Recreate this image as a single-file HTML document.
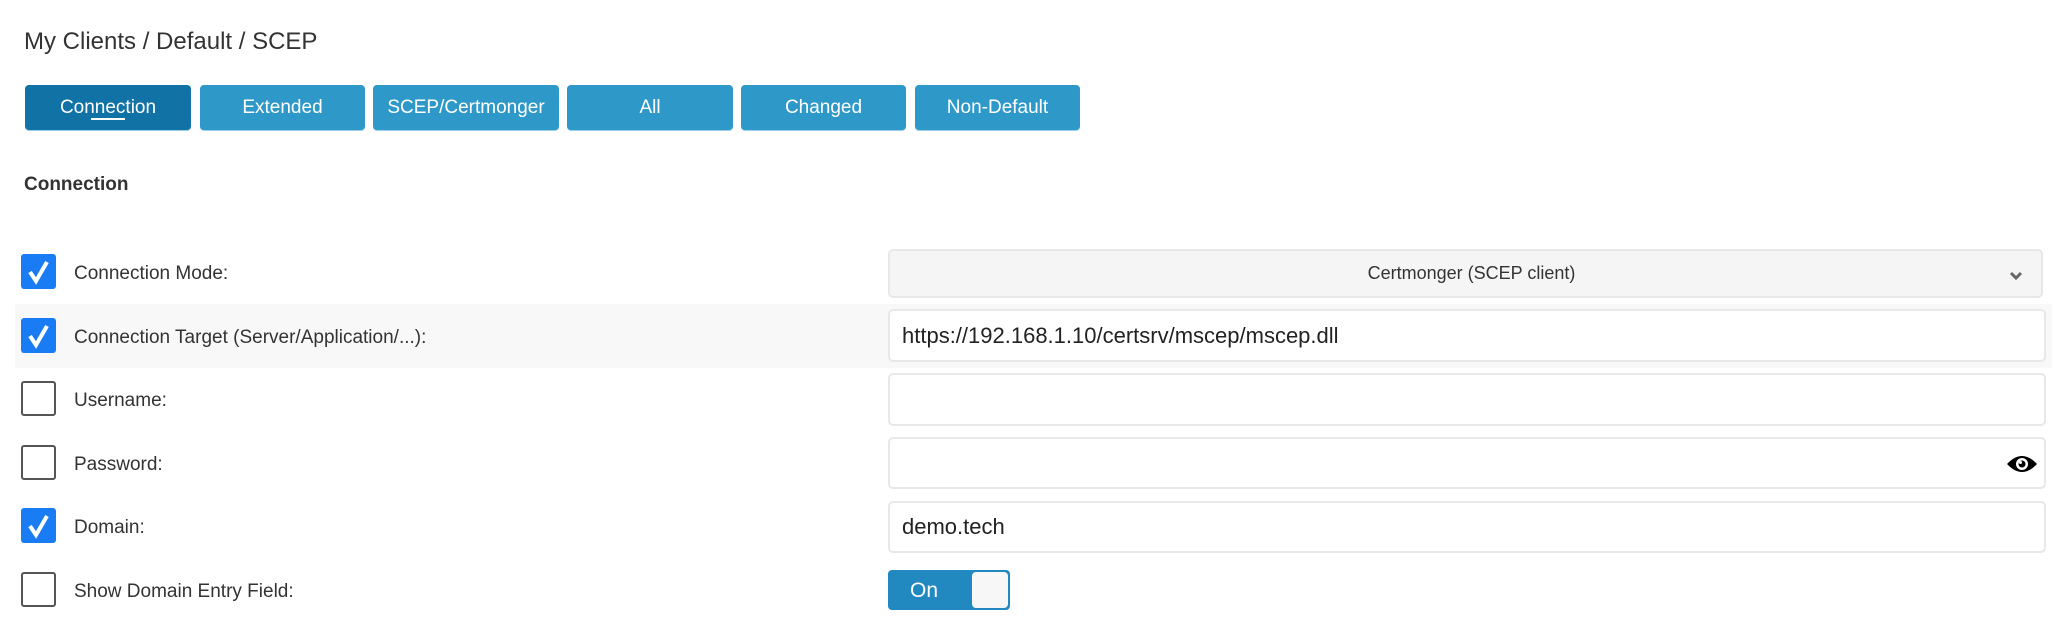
<!DOCTYPE html>
<html><head><meta charset="utf-8"><style>
body{margin:0;width:2064px;height:622px;background:#fff;font-family:"Liberation Sans",sans-serif;position:relative;overflow:hidden;color:#333}
.a{position:absolute}
.title{left:24px;top:28px;font-size:24px;color:#333}
.btn{top:85px;height:45px;border-radius:4px;background:#2e98c9;color:#fff;font-size:19px;text-align:center;line-height:45px;box-shadow:0 1px 0 #9cd0e8}
.btn.act{background:#1172a6}
.sec{left:24px;top:174px;font-size:19px;font-weight:bold;color:#333}
.band{left:15px;top:304px;width:2037px;height:64px;background:#f8f8f8}
.cb{left:21px;width:35px;height:35px;border-radius:3px;box-sizing:border-box}
.cb.on{background:#1a7cf5}
.cb.off{border:2px solid #555;background:#fff}
.lbl{left:74px;font-size:19px;color:#333}
.inp{left:888px;width:1158px;box-sizing:border-box;border:2px solid #e8e8e8;border-radius:5px;background:#fff;font-size:22px;color:#222;padding-left:12px}
</style></head><body>
<div class="a title">My Clients / Default / SCEP</div>
<div class="a btn act" style="left:25px;width:166px">Connection<div class="a" style="left:66px;top:33px;width:34px;height:2px;background:#fff"></div></div>
<div class="a btn" style="left:200px;width:165px">Extended</div>
<div class="a btn" style="left:373px;width:186px">SCEP/Certmonger</div>
<div class="a btn" style="left:567px;width:166px">All</div>
<div class="a btn" style="left:741px;width:165px">Changed</div>
<div class="a btn" style="left:915px;width:165px">Non-Default</div>
<div class="a sec">Connection</div>
<div class="a band"></div>

<div class="a cb on" style="top:254px"><svg width="35" height="35"><path d="M9 18 L15 27 L26 8" stroke="#fff" stroke-width="4" fill="none"/></svg></div>
<div class="a lbl" style="top:263px">Connection Mode:</div>
<div class="a cb on" style="top:318px"><svg width="35" height="35"><path d="M9 18 L15 27 L26 8" stroke="#fff" stroke-width="4" fill="none"/></svg></div>
<div class="a lbl" style="top:327px">Connection Target (Server/Application/...):</div>
<div class="a cb off" style="top:381px"></div>
<div class="a lbl" style="top:390px">Username:</div>
<div class="a cb off" style="top:445px"></div>
<div class="a lbl" style="top:454px">Password:</div>
<div class="a cb on" style="top:508px"><svg width="35" height="35"><path d="M9 18 L15 27 L26 8" stroke="#fff" stroke-width="4" fill="none"/></svg></div>
<div class="a lbl" style="top:517px">Domain:</div>
<div class="a cb off" style="top:572px"></div>
<div class="a lbl" style="top:581px">Show Domain Entry Field:</div>

<div class="a inp" style="top:249px;height:49px;width:1155px;background:#f5f5f5;text-align:center;font-size:18px;line-height:45px;color:#333">Certmonger (SCEP client)
<svg class="a" style="left:1119px;top:20px" width="14" height="10"><path d="M2 2 L7 7 L12 2" stroke="#666" stroke-width="3" fill="none"/></svg></div>
<div class="a inp" style="top:309px;height:53px;line-height:49px">https://192.168.1.10/certsrv/mscep/mscep.dll</div>
<div class="a inp" style="top:373px;height:53px"></div>
<div class="a inp" style="top:437px;height:52px">
<svg class="a" style="left:1116px;top:15px" width="32" height="20"><path d="M1 10 Q16 -6 31 10 Q16 26 1 10Z" fill="#000"/><circle cx="16" cy="10" r="6" fill="#fff"/><circle cx="16" cy="10" r="3.5" fill="#000"/><circle cx="14.5" cy="8.5" r="1.5" fill="#fff"/></svg></div>
<div class="a inp" style="top:501px;height:52px;line-height:48px">demo.tech</div>

<div class="a" style="left:888px;top:570px;width:122px;height:40px;border-radius:4px;background:#2188c0;box-sizing:border-box;border:2px solid #2188c0">
<span class="a" style="left:20px;top:7px;color:#fff;font-size:21px">On</span>
<div class="a" style="left:82px;top:0;width:36px;height:36px;background:#f7f7f7;border-radius:4px"></div></div>
</body></html>
